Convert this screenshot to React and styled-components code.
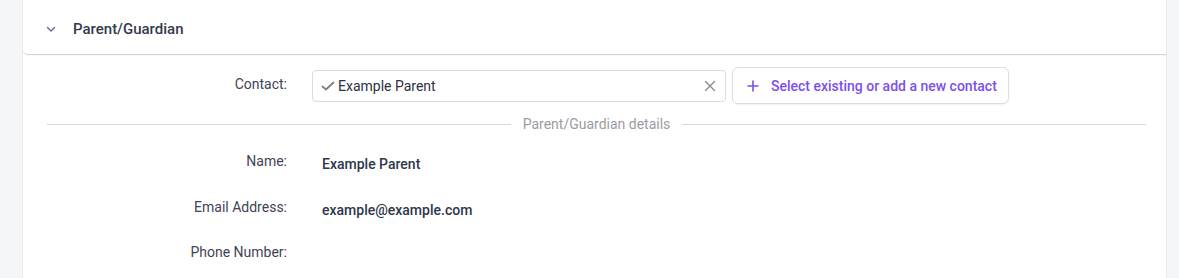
import React from "react";
import styled, { createGlobalStyle } from "styled-components";

const GlobalStyle = createGlobalStyle`
  html, body {
    margin: 0;
    padding: 0;
    background: #f5f6f8;
    font-family: Roboto, "Liberation Sans", Arial, sans-serif;
    -webkit-font-smoothing: antialiased;
  }
`;

const Page = styled.div`
  padding-left: 22px;
  padding-right: 12px;
  height: 278px;
  overflow: hidden;
`;

const Card = styled.div`
  background: #ffffff;
  border-left: 1px solid #e9ebef;
  border-right: 1px solid #e9ebef;
  height: 100%;
`;

const Header = styled.div`
  display: flex;
  align-items: center;
  gap: 16px;
  height: 55px;
  padding: 3px 0 0 22px;
  box-sizing: border-box;
  border-bottom: 1px solid #d4d5d8;
  border-bottom-left-radius: 5px;
  box-shadow: 0 1px 1px rgba(0, 0, 0, 0.03);
`;

const Title = styled.h3`
  margin: 0;
  font-size: 15px;
  font-weight: 500;
  color: #343a4d;
`;

const Body = styled.div`
  padding: 12px 20px 0 24px;
`;

const Row = styled.div`
  display: grid;
  grid-template-columns: 240px 1fr;
  column-gap: 25px;
  align-items: start;
  min-height: ${(p) => p.$h || 46}px;
`;

const Label = styled.div`
  text-align: right;
  font-size: 14px;
  color: #3f4455;
  padding-top: ${(p) => p.$top || 0}px;
`;

const Value = styled.div`
  font-size: 14px;
  font-weight: 500;
  color: #30364b;
  padding-left: 10px;
  padding-top: ${(p) => p.$top || 0}px;
`;

const Controls = styled.div`
  display: flex;
  align-items: center;
  gap: 6px;
`;

const Select = styled.div`
  display: flex;
  align-items: center;
  width: 414px;
  height: 32px;
  box-sizing: border-box;
  border: 1px solid #dadbde;
  border-radius: 4px;
  padding: 0 8px 0 8px;
  font-size: 14px;
  color: #2d3142;
`;

const SelectText = styled.span`
  flex: 1;
  display: flex;
  align-items: center;
  gap: 3px;
`;

const AddButton = styled.button`
  display: flex;
  align-items: center;
  gap: 12px;
  height: 37px;
  padding: 0 11px 0 14px;
  background: #fff;
  border: 1px solid #dcdde1;
  border-radius: 6px;
  box-shadow: 0 1px 2px rgba(0, 0, 0, 0.06);
  font-family: inherit;
  font-size: 14px;
  font-weight: 500;
  color: #7a4ff0;
  cursor: pointer;
`;

const Divider = styled.div`
  display: flex;
  align-items: center;
  gap: 12px;
  margin: 3px 0 21px;
  font-size: 14px;
  color: #9a9ca3;
  &::before,
  &::after {
    content: "";
    flex: 1;
    height: 1px;
    background: #d6d7da;
  }
`;

function Chevron() {
  return (
    <svg width="12" height="12" viewBox="0 0 12 12">
      <path d="M2.5 4.5 L6 8 L9.5 4.5" fill="none" stroke="#5b6b8c" strokeWidth="1.4" strokeLinecap="round" strokeLinejoin="round" />
    </svg>
  );
}

function Check() {
  return (
    <svg width="14" height="14" viewBox="0 0 14 14">
      <path d="M1.5 7.5 L5 10.5 L12.5 3.5" fill="none" stroke="#7d7f86" strokeWidth="1.8" strokeLinecap="round" strokeLinejoin="round" />
    </svg>
  );
}

function Close() {
  return (
    <svg width="14" height="14" viewBox="0 0 14 14">
      <path d="M2.5 2.5 L11.5 11.5 M11.5 2.5 L2.5 11.5" fill="none" stroke="#8a8c92" strokeWidth="1.4" strokeLinecap="round" />
    </svg>
  );
}

function Plus() {
  return (
    <svg width="12" height="12" viewBox="0 0 12 12">
      <path d="M6 1 V11 M1 6 H11" fill="none" stroke="#7a4ff0" strokeWidth="1.6" strokeLinecap="round" />
    </svg>
  );
}

export default function App() {
  return (
    <Page>
      <GlobalStyle />
      <Card>
        <Header>
          <Chevron />
          <Title>Parent/Guardian</Title>
        </Header>
        <Body>
          <Row $h={0}>
            <Label $top={9}>Contact:</Label>
            <Controls>
              <Select>
                <SelectText>
                  <Check />
                  Example Parent
                </SelectText>
                <Close />
              </Select>
              <AddButton>
                <Plus />
                Select existing or add a new contact
              </AddButton>
            </Controls>
          </Row>
          <Divider>Parent/Guardian details</Divider>
          <Row $h={46}>
            <Label>Name:</Label>
            <Value $top={3}>Example Parent</Value>
          </Row>
          <Row $h={45}>
            <Label>Email Address:</Label>
            <Value $top={3}>example@example.com</Value>
          </Row>
          <Row>
            <Label>Phone Number:</Label>
            <Value $top={3}></Value>
          </Row>
        </Body>
      </Card>
    </Page>
  );
}
